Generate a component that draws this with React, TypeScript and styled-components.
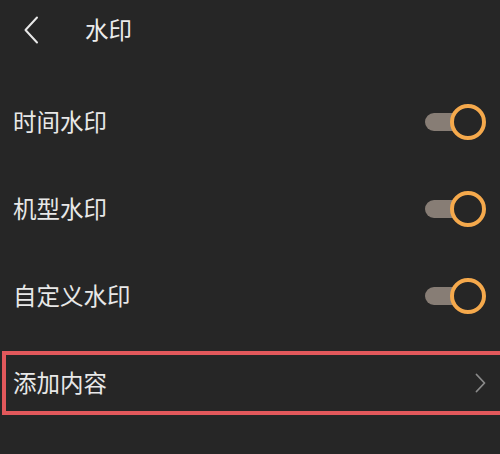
import React from "react";
import styled, { createGlobalStyle } from "styled-components";

const Global = createGlobalStyle`
  html, body {
    margin: 0;
    padding: 0;
    background: #262626;
  }
  body {
    font-family: "Noto Sans CJK SC", "Noto Sans", sans-serif;
    color: #e6e6e6;
    overflow: hidden;
  }
`;

const Page = styled.div`
  width: 500px;
  height: 454px;
  background: #262626;
  overflow: hidden;
`;

const Header = styled.div`
  height: 60px;
  display: flex;
  align-items: center;
  padding-left: 22px;
`;

const BackButton = styled.div`
  width: 18px;
  height: 28px;
  display: flex;
  align-items: center;
  justify-content: center;
`;

const Title = styled.div`
  margin-left: 45px;
  font-size: 23.5px;
  line-height: 1;
  color: #ececec;
`;

const List = styled.div`
  padding-top: 18px;
`;

const Row = styled.div`
  height: 87px;
  display: flex;
  align-items: center;
  justify-content: space-between;
  padding: 0 14px 0 13px;
`;

const Label = styled.span`
  font-size: 23.5px;
  line-height: 1;
  color: #e8e8e8;
`;

const ToggleWrap = styled.div`
  position: relative;
  width: 61px;
  height: 36px;
  display: flex;
  align-items: center;
`;

const Track = styled.div`
  width: 46px;
  height: 18px;
  border-radius: 9px;
  background: #877d75;
`;

const Knob = styled.div`
  position: absolute;
  right: 0;
  top: 0;
  width: 36px;
  height: 36px;
  box-sizing: border-box;
  border-radius: 50%;
  border: 4px solid #f5a94c;
  background: #262626;
`;

const AddRow = styled.div`
  height: 87px;
  box-sizing: border-box;
  padding: 12px 0 11px 2px;
  display: flex;
`;

const HighlightBox = styled.div`
  flex: 1;
  margin-right: -10px;
  box-sizing: border-box;
  border: 4px solid #e2585b;
  display: flex;
  align-items: center;
  justify-content: space-between;
  padding: 0 20px 0 7px;
`;

const Toggle = () => (
  <ToggleWrap>
    <Track />
    <Knob />
  </ToggleWrap>
);

const items = ["时间水印", "机型水印", "自定义水印"];

export default function App() {
  return (
    <Page>
      <Global />
      <Header>
        <BackButton>
          <svg width="16" height="28" viewBox="0 0 16 28" fill="none">
            <path d="M14 1.5 L2.5 14 L14 26.5" stroke="#e8e8e8" strokeWidth="2" strokeLinecap="round" strokeLinejoin="round" />
          </svg>
        </BackButton>
        <Title>水印</Title>
      </Header>
      <List>
        {items.map((t) => (
          <Row key={t}>
            <Label>{t}</Label>
            <Toggle />
          </Row>
        ))}
        <AddRow>
          <HighlightBox>
            <Label>添加内容</Label>
            <svg width="11" height="20" viewBox="0 0 11 20" fill="none">
              <path d="M1.5 1.5 L9.5 10 L1.5 18.5" stroke="#8a8a8a" strokeWidth="1.8" strokeLinecap="round" strokeLinejoin="round" />
            </svg>
          </HighlightBox>
        </AddRow>
      </List>
    </Page>
  );
}
